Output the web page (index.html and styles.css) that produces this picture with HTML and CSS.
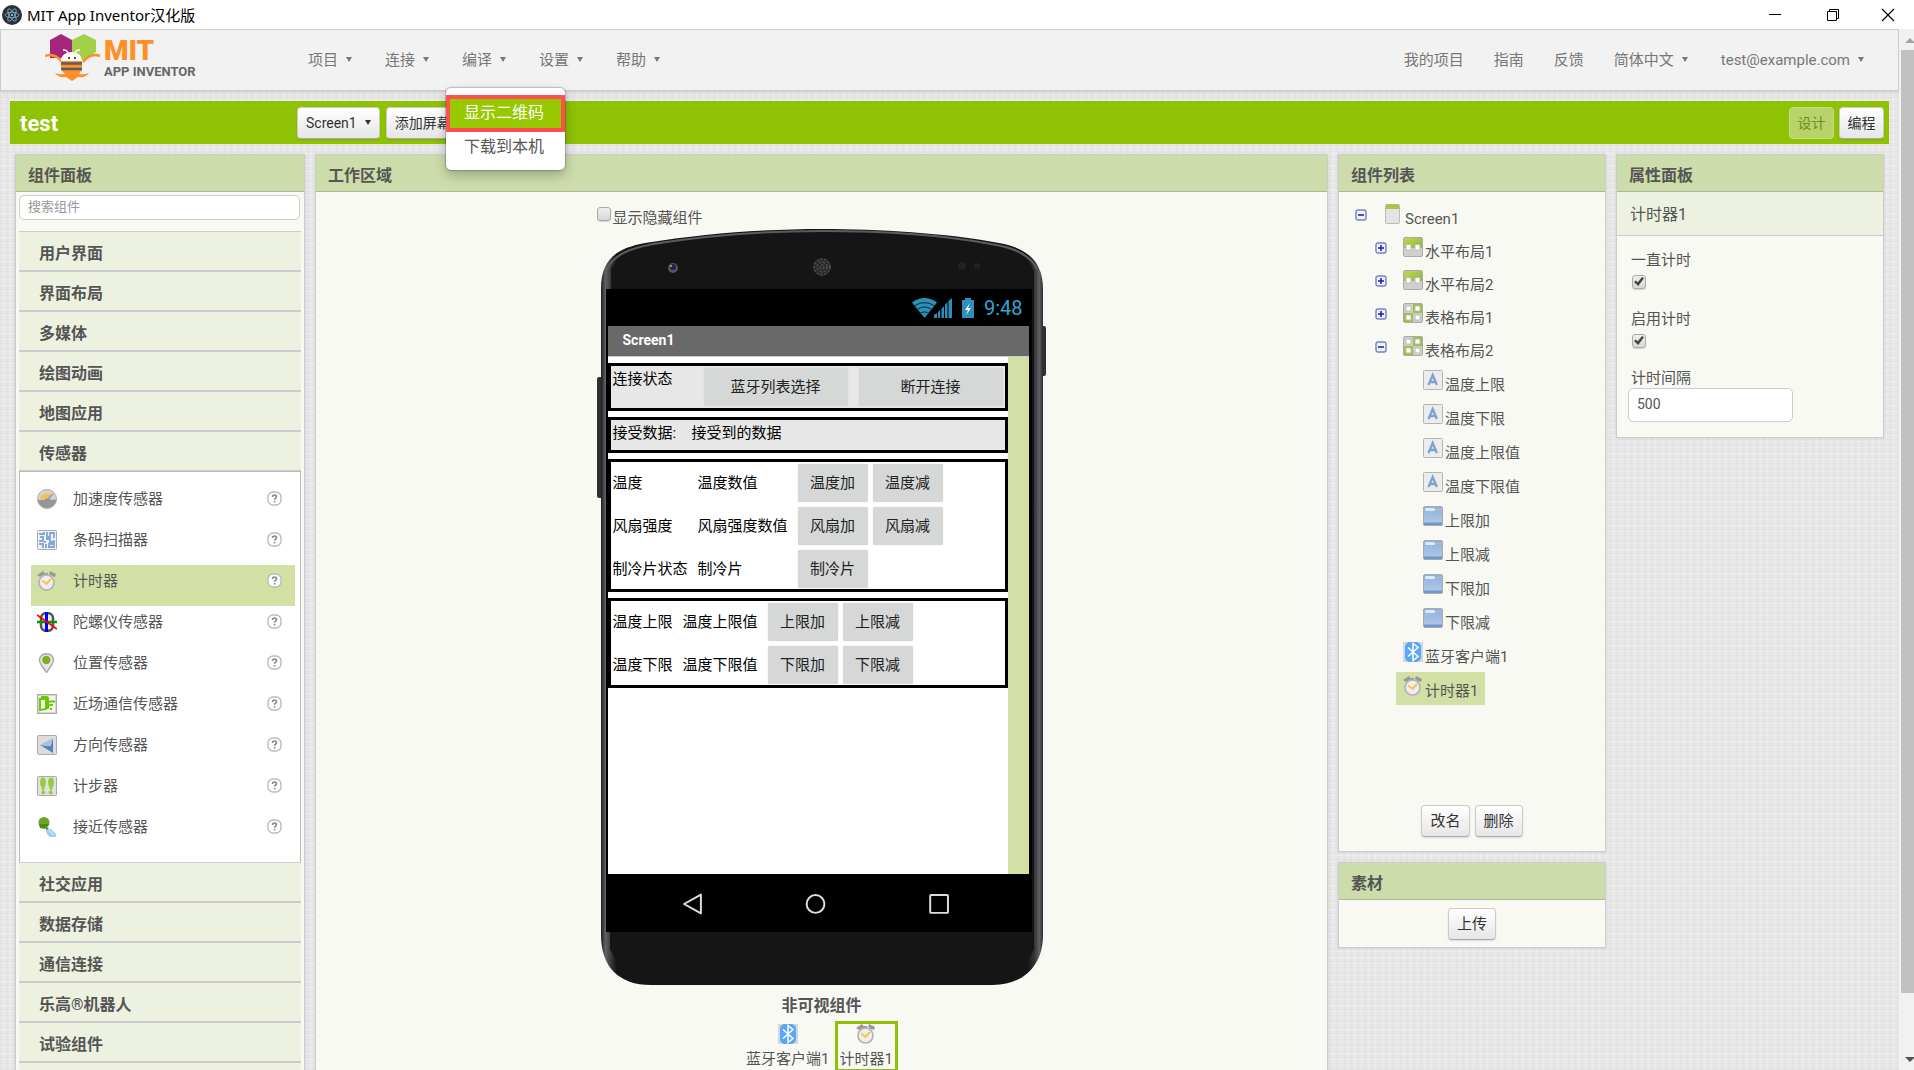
FILE: index.html
```html
<!DOCTYPE html>
<html lang="zh-CN">
<head>
<meta charset="utf-8">
<title>MIT App Inventor汉化版</title>
<link rel="stylesheet" href="styles.css">
</head>
<body>
<svg class="sprite" aria-hidden="true">
  <defs>
    <linearGradient id="g-green" x1="0" y1="0" x2="1" y2="1"><stop offset="0" stop-color="#b9da5c"/><stop offset="1" stop-color="#93b62c"/></linearGradient>
    <linearGradient id="g-blue" x1="0" y1="0" x2="0" y2="1"><stop offset="0" stop-color="#8fafdb"/><stop offset="1" stop-color="#b4cbe8"/></linearGradient>
    <linearGradient id="g-edge" x1="0" y1="0" x2="1" y2="0"><stop offset="0" stop-color="#1d1d1f"/><stop offset="0.01" stop-color="#606163"/><stop offset="0.022" stop-color="#3b3b3d"/><stop offset="0.035" stop-color="#151515"/><stop offset="0.965" stop-color="#151515"/><stop offset="0.98" stop-color="#333336"/><stop offset="0.992" stop-color="#606063"/><stop offset="1" stop-color="#29292b"/></linearGradient>
  </defs>
  <symbol id="i-help" viewBox="0 0 15 15"><rect x="1" y="1" width="13" height="13" rx="5" fill="#fff" stroke="#bbb" stroke-width="1.400"/><path d="M5.500 6c0-2.600 4-2.500 4-.2 0 1.500-1.900 1.300-1.900 3M7.600 10v1.500" fill="none" stroke="#888" stroke-width="1.600"/></symbol>
  <symbol id="i-accel" viewBox="0 0 20 20"><circle cx="10" cy="10" r="9.500" fill="#d4d4d4" stroke="#aaa"/><path d="M.800 11a9.300 9.300 0 0 0 18.400 0L17 10.500 14 11 12.500 9 9 9 7 11z" fill="#969696"/><path d="M3 11c0-5 5-8 11-6l1 2-4 3C8 8 6.500 9 6 11z" fill="#f9bf55"/><path d="M10 11l6-6" stroke="#999" stroke-width="1.500"/></symbol>
  <symbol id="i-barcode" viewBox="0 0 20 20"><rect x=".5" y=".5" width="19" height="19" rx="1" fill="#eef3fa" stroke="#aaa"/><path d="M2 4h5V2M10 2v5h3V3h4v5M3 7h3v4H2M9 9h4v3h4v-2M2 14h4v4M9 14v4M12 14h5v3h-5zM8 11v2" fill="none" stroke="#83a6d6" stroke-width="1.800"/></symbol>
  <symbol id="i-clock" viewBox="0 0 20 20"><path d="M0 4l6-4 2 3-5 3zM12 3l1-3 6 3-1 3-3-1zM7 2h4v2H7z" fill="#999"/><circle cx="9.500" cy="11.500" r="7.500" fill="#eee" stroke="#b3b3b3" stroke-width="1.700"/><path d="M5 9.500l4.500 3.300L14 8" fill="none" stroke="#fac05a" stroke-width="2"/></symbol>
  <symbol id="i-gyro" viewBox="0 0 20 20"><rect x="4" y="1.200" width="12" height="17.600" rx="5" fill="#eee" stroke="#555" stroke-width="2.500"/><path d="M0 10h20" stroke="#090" stroke-width="2.500"/><path d="M9.500 0v20" stroke="#00f" stroke-width="3"/><path d="M0 3l20 14" stroke="#f00" stroke-width="1.800"/></symbol>
  <symbol id="i-location" viewBox="0 0 20 20"><path d="M9.500 19.500L4 11.500C0 5 5 .7 9.500.7S19 5 15 11.500z" fill="#e6e6e6" stroke="#aaa" stroke-width="1.400"/><circle cx="9.300" cy="7" r="4.200" fill="#7eae25"/></symbol>
  <symbol id="i-nfc" viewBox="0 0 20 20"><rect x=".7" y=".7" width="18.600" height="18.600" fill="#f4f4f4" stroke="#aaa" stroke-width="1.400"/><path d="M3 5h6v10l-6 1zM5 4V3h5l1 1v11" fill="#fff" stroke="#6c0" stroke-width="2"/><path d="M11 9c2-2 5-2 7-1M12 12c1-2 3-1 4-1M14 14v2" fill="none" stroke="#6c0" stroke-width="2"/></symbol>
  <symbol id="i-orient" viewBox="0 0 20 20"><rect x=".5" y=".5" width="19" height="19" rx="1" fill="#dcdcdc" stroke="#aaa"/><path d="M3 10l10.500 1L16 3v15z" fill="#5581be"/><path d="M3 10L16 3l-4 8z" fill="#a9bfdf"/></symbol>
  <symbol id="i-step" viewBox="0 0 20 20"><rect x=".5" y=".5" width="19" height="19" rx="1" fill="#e0e0e0" stroke="#aaa"/><g fill="#9bc93d"><ellipse cx="6" cy="6.500" rx="2.900" ry="5"/><ellipse cx="14" cy="6.500" rx="2.900" ry="5"/><path d="M4.500 11h3l-.2 3H5zM12.500 11h3l-.5 3h-2z"/><circle cx="6.300" cy="16.500" r="1.900"/><circle cx="13.700" cy="16.500" r="1.900"/></g></symbol>
  <symbol id="i-prox" viewBox="0 0 20 20"><circle cx="7" cy="5.500" r="5.500" fill="#6ba32b"/><path d="M2 7l1 4 5 1 4-5zM9 10l3 1-3 3z" fill="#4c8a1c"/><path d="M9 13l5-1 5 5v3h-6c-2-1-4-4-4-7z" fill="#93d4f3"/><path d="M12 14l5 4" stroke="#e3f5fd"/></symbol>
  <symbol id="i-screen" viewBox="0 0 20 20"><rect x="2.500" y=".5" width="14" height="19" rx="1" fill="#e4e4e4" stroke="#bbb"/><path d="M3 .500h13V5H3z" fill="#a6c83c"/></symbol>
  <symbol id="i-harr" viewBox="0 0 20 20"><rect x=".5" y=".5" width="19" height="19" rx="1.500" fill="#cfcfcf" stroke="#aaa"/><path d="M1 1h18v10H1z" fill="url(#g-green)"/><rect x="3" y="7.500" width="5" height="5.500" rx="1" fill="#fff" stroke="#bbb"/><rect x="12" y="7.500" width="5" height="5.500" rx="1" fill="#fff" stroke="#bbb"/></symbol>
  <symbol id="i-tarr" viewBox="0 0 20 20"><rect x=".5" y=".5" width="19" height="19" rx="1.500" fill="#cfcfcf" stroke="#aaa"/><path d="M10 1h9v9h-9zM1 10h9v9H1z" fill="#9dc036"/><g fill="#fff" stroke="#bbb"><rect x="3" y="3" width="5" height="5"/><rect x="12" y="3" width="5" height="5"/><rect x="3" y="12" width="5" height="5"/><rect x="12" y="12" width="5" height="5"/></g></symbol>
  <symbol id="i-label" viewBox="0 0 20 20"><rect x=".5" y=".5" width="19" height="19" rx="1" fill="#ececec" stroke="#b4b4b4"/><path d="M5.500 15L9.700 5l4.200 10M7 12h5.500" fill="none" stroke="#7ea0d3" stroke-width="2.300"/></symbol>
  <symbol id="i-button" viewBox="0 0 20 20"><rect x=".5" y=".5" width="19" height="19" rx="1.500" fill="url(#g-blue)" stroke="#aaa"/><path d="M1 16.500h18V19H1z" fill="#7196cb"/><path d="M1 8C5 8 8 5 12 4L19 3" fill="none" stroke="#a8c1e5"/><rect x="2" y="2" width="10" height="3" rx="1.500" fill="#dfe9f6"/></symbol>
  <symbol id="i-bt" viewBox="0 0 20 20"><path d="M0 0h20v20H0z" fill="#d7d7d7"/><rect x="2" y="0" width="16" height="20" rx="5" fill="#5aa6f8"/><path d="M5 5.500l10 9L10 18.500V1.500l5 4-10 9" fill="none" stroke="#fff" stroke-width="1.500"/></symbol>
  <symbol id="i-plus" viewBox="0 0 12 12"><rect x="1" y="1" width="10" height="10" rx="2" fill="#eef2fb" stroke="#7482bd" stroke-width="1.400"/><path d="M3 6h6M6 3v6" stroke="#1515cc" stroke-width="1.500"/></symbol>
  <symbol id="i-minus" viewBox="0 0 12 12"><rect x="1" y="1" width="10" height="10" rx="2" fill="#eef2fb" stroke="#7482bd" stroke-width="1.400"/><path d="M3 6h6" stroke="#1515cc" stroke-width="1.500"/></symbol>
</svg>

<header class="titlebar">
  <svg class="app-icon" viewBox="0 0 20 20"><circle cx="10" cy="10" r="10" fill="#2b2e3b"/><g fill="none" stroke="#86b9c6" stroke-width=".8"><ellipse cx="10" cy="10" rx="7" ry="2.700"/><ellipse cx="10" cy="10" rx="7" ry="2.700" transform="rotate(60 10 10)"/><ellipse cx="10" cy="10" rx="7" ry="2.700" transform="rotate(120 10 10)"/></g><circle cx="10" cy="10" r="1" fill="#9feaf9"/></svg>
  <span class="window-title">MIT App Inventor汉化版</span>
  <div class="window-controls">
    <button aria-label="最小化"><svg viewBox="0 0 14 14"><path d="M1 6.500h12" stroke="#000"/></svg></button>
    <button aria-label="还原"><svg viewBox="0 0 14 14" fill="none" stroke="#000"><path d="M1.500 3.500h9v9h-9zM3.500 3V1.500h9v9H11"/></svg></button>
    <button aria-label="关闭"><svg viewBox="0 0 14 14"><path d="M1 1l12 12M13 1L1 13" stroke="#000" stroke-width="1.200"/></svg></button>
  </div>
</header>

<div class="viewport">
<div class="page">
  <nav class="topbar">
    <a class="logo" href="#">
      <svg class="bee" viewBox="45 32 56 48"><path d="M50 39l11-6 11 6v18H50z" fill="#a6257d"/><path d="M72 39l12-6 12 6v12l-12 8H72z" fill="#a2d046"/><path d="M45 55c8-3 13 1 17 6M100 55c-8-3-13 1-17 6" fill="none" stroke="#ff8f26" stroke-width="2.500"/><path d="M61 60h21v9l-3 4c2 0 5 1 10-1-2 3-6 5-11 4l-6 4-6-4c-5 1-9-1-11-4 5 2 8 1 10 1l-4-4z" fill="#ff8f26"/><path d="M61 62.500h21M61 68h21" stroke="#5c5c60" stroke-width="2.600"/><path d="M61 60c0-12 21-12 21 0z" fill="#fff"/><path d="M63 49c4 0 5 2 5 4M80 49c-4 0-5 2-5 4" fill="none" stroke="#fff" stroke-width="1.500"/><circle cx="69" cy="57" r="1.200" fill="#555"/><circle cx="75" cy="57" r="1.200" fill="#555"/></svg>
      <span class="wordmark"><b>MIT</b><small>APP INVENTOR</small></span>
    </a>
    <div class="menus">
      <button class="menu">项目<i class="caret"></i></button>
      <button class="menu">连接<i class="caret"></i></button>
      <div class="menu-anchor">
        <button class="menu" aria-expanded="true">编译<i class="caret"></i></button>
        <div class="dropdown">
          <a class="current" href="#">显示二维码</a>
          <a href="#">下载到本机</a>
        </div>
      </div>
      <button class="menu">设置<i class="caret"></i></button>
      <button class="menu">帮助<i class="caret"></i></button>
    </div>
    <div class="account">
      <a href="#">我的项目</a>
      <a href="#">指南</a>
      <a href="#">反馈</a>
      <button class="menu">简体中文<i class="caret"></i></button>
      <button class="menu user">test@example.com<i class="caret"></i></button>
    </div>
  </nav>

  <div class="projectbar">
    <h1>test</h1>
    <button class="btn">Screen1<i class="caret"></i></button>
    <button class="btn">添加屏幕</button>
    <div class="view-switch">
      <button class="btn" disabled>设计</button>
      <button class="btn">编程</button>
    </div>
  </div>

  <main class="columns">
    <section class="panel palette">
      <h2>组件面板</h2>
      <input class="search" type="text" placeholder="搜索组件" aria-label="搜索组件">
      <div class="categories">
        <a class="category" href="#">用户界面</a>
        <a class="category" href="#">界面布局</a>
        <a class="category" href="#">多媒体</a>
        <a class="category" href="#">绘图动画</a>
        <a class="category" href="#">地图应用</a>
        <a class="category" href="#">传感器</a>
        <ul class="components">
          <li><svg><use href="#i-accel"/></svg><span>加速度传感器</span><svg class="help"><use href="#i-help"/></svg></li>
          <li><svg><use href="#i-barcode"/></svg><span>条码扫描器</span><svg class="help"><use href="#i-help"/></svg></li>
          <li class="selected"><svg><use href="#i-clock"/></svg><span>计时器</span><svg class="help"><use href="#i-help"/></svg></li>
          <li><svg><use href="#i-gyro"/></svg><span>陀螺仪传感器</span><svg class="help"><use href="#i-help"/></svg></li>
          <li><svg><use href="#i-location"/></svg><span>位置传感器</span><svg class="help"><use href="#i-help"/></svg></li>
          <li><svg><use href="#i-nfc"/></svg><span>近场通信传感器</span><svg class="help"><use href="#i-help"/></svg></li>
          <li><svg><use href="#i-orient"/></svg><span>方向传感器</span><svg class="help"><use href="#i-help"/></svg></li>
          <li><svg><use href="#i-step"/></svg><span>计步器</span><svg class="help"><use href="#i-help"/></svg></li>
          <li><svg><use href="#i-prox"/></svg><span>接近传感器</span><svg class="help"><use href="#i-help"/></svg></li>
        </ul>
        <a class="category" href="#">社交应用</a>
        <a class="category" href="#">数据存储</a>
        <a class="category" href="#">通信连接</a>
        <a class="category" href="#">乐高®机器人</a>
        <a class="category" href="#">试验组件</a>
        <div class="category"></div>
      </div>
    </section>

    <section class="panel workspace">
      <h2>工作区域</h2>
      <div class="stage">
        <label class="show-hidden"><input type="checkbox"><span>显示隐藏组件</span></label>
        <div class="phone">
          <svg class="phone-body" viewBox="0 0 450 757">
            <rect x="0" y="148" width="6" height="121" rx="2" fill="#2f2f31"/><rect x="443" y="97" width="6" height="50" rx="2" fill="#2f2f31"/>
            <path d="M4 60C4 28 22 19 48 14C110 4 170 0 225 0S350 4 402 14C430 19 446 32 446 60V706C446 738 425 756 396 756H54C22 756 4 738 4 706z" fill="url(#g-edge)"/>
            <path d="M14 40C24 24 40 20 60 17C120 7 170 4 225 4S340 7 392 17C412 20 428 26 437 42V720C428 738 412 753 394 753H56C36 753 22 738 13 720z" fill="#151515"/>
            <path d="M10 40C18 24 36 19 56 15C120 5 170 2 225 2S340 5 394 15C414 18 432 24 440 40" fill="none" stroke="#5b5c5e" stroke-width="2"/>
            <circle cx="76" cy="39" r="5" fill="#555"/><circle cx="76" cy="38" r="3" fill="#20205a"/><circle cx="74" cy="37" r="1" fill="#aaa"/>
            <circle cx="225" cy="38" r="9" fill="#2c2c2c"/><g fill="none" stroke="#666" stroke-dasharray="2 2"><circle cx="225" cy="38" r="8"/><circle cx="225" cy="38" r="5"/><circle cx="225" cy="38" r="2"/></g>
            <circle cx="365" cy="37" r="4" fill="#222"/><circle cx="380" cy="37" r="3" fill="#222"/>
          </svg>
          <div class="display">
            <div class="status">
              <svg class="signal" viewBox="0 0 64 20"><path d="M0 4.500C7-1.500 18-1.500 25 4.500L12.500 20z" fill="#2e8fba"/><path d="M2 8.500c6-5 15-5 21 0M5 12c4-4 11-4 15 0M8 15.500c3-2 6-2 9 0" fill="none" stroke="#06202b" stroke-width="1"/><path d="M22 20v-3l3-2v5zM26 20v-6l2-2v8zM29.500 20v-9l2.500-3v12zM33 20V7l2.500-3v16zM36.500 20V3L40 0v20z" fill="#2e8fba"/><path d="M50 2h3V0h6v2h3v18H50z" fill="#2e8fba"/><path d="M58 5l-5 7h3l-2 5 5-7h-3z" fill="#fff"/></svg>
              <span>9:48</span>
            </div>
            <div class="app-title">Screen1</div>
            <div class="app-screen">
              <div class="form">
                <div class="frame tinted connect">
                  <span>连接状态</span><button class="device-btn">蓝牙列表选择</button><button class="device-btn">断开连接</button>
                </div>
                <div class="frame tinted received"><span>接受数据:</span><span>接受到的数据</span></div>
                <div class="frame readings">
                  <span>温度</span><span>温度数值</span><button class="device-btn">温度加</button><button class="device-btn">温度减</button>
                  <span>风扇强度</span><span>风扇强度数值</span><button class="device-btn">风扇加</button><button class="device-btn">风扇减</button>
                  <span>制冷片状态</span><span>制冷片</span><button class="device-btn">制冷片</button>
                </div>
                <div class="frame limits">
                  <span>温度上限</span><span>温度上限值</span><button class="device-btn">上限加</button><button class="device-btn">上限减</button>
                  <span>温度下限</span><span>温度下限值</span><button class="device-btn">下限加</button><button class="device-btn">下限减</button>
                </div>
              </div>
            </div>
            <svg class="navkeys" viewBox="0 0 426 58" fill="none" stroke="#ddd" stroke-width="2"><path d="M77 30l17-9.500v19z" stroke-linejoin="round"/><circle cx="210" cy="30" r="9"/><rect x="326" y="21" width="18" height="18" rx="1"/></svg>
          </div>
        </div>
        <h3>非可视组件</h3>
        <div class="invisible">
          <div class="nonvisible"><svg><use href="#i-bt"/></svg><span>蓝牙客户端1</span></div>
          <div class="nonvisible picked"><svg><use href="#i-clock"/></svg><span>计时器1</span></div>
        </div>
      </div>
    </section>

    <div class="side">
      <section class="panel">
        <h2>组件列表</h2>
        <ul class="tree">
          <li class="branch"><svg class="toggle"><use href="#i-minus"/></svg><span class="node"><svg><use href="#i-screen"/></svg><span>Screen1</span></span></li>
          <li class="branch l1"><svg class="toggle"><use href="#i-plus"/></svg><span class="node"><svg><use href="#i-harr"/></svg><span>水平布局1</span></span></li>
          <li class="branch l1"><svg class="toggle"><use href="#i-plus"/></svg><span class="node"><svg><use href="#i-harr"/></svg><span>水平布局2</span></span></li>
          <li class="branch l1"><svg class="toggle"><use href="#i-plus"/></svg><span class="node"><svg><use href="#i-tarr"/></svg><span>表格布局1</span></span></li>
          <li class="branch l1"><svg class="toggle"><use href="#i-minus"/></svg><span class="node"><svg><use href="#i-tarr"/></svg><span>表格布局2</span></span></li>
          <li class="l2"><span class="node"><svg><use href="#i-label"/></svg><span>温度上限</span></span></li>
          <li class="l2"><span class="node"><svg><use href="#i-label"/></svg><span>温度下限</span></span></li>
          <li class="l2"><span class="node"><svg><use href="#i-label"/></svg><span>温度上限值</span></span></li>
          <li class="l2"><span class="node"><svg><use href="#i-label"/></svg><span>温度下限值</span></span></li>
          <li class="l2"><span class="node"><svg><use href="#i-button"/></svg><span>上限加</span></span></li>
          <li class="l2"><span class="node"><svg><use href="#i-button"/></svg><span>上限减</span></span></li>
          <li class="l2"><span class="node"><svg><use href="#i-button"/></svg><span>下限加</span></span></li>
          <li class="l2"><span class="node"><svg><use href="#i-button"/></svg><span>下限减</span></span></li>
          <li class="l1"><span class="node"><svg><use href="#i-bt"/></svg><span>蓝牙客户端1</span></span></li>
          <li class="l1"><span class="node selected"><svg><use href="#i-clock"/></svg><span>计时器1</span></span></li>
        </ul>
        <div class="actions"><button class="btn">改名</button><button class="btn">删除</button></div>
      </section>
      <section class="panel">
        <h2>素材</h2>
        <div class="upload"><button class="btn">上传</button></div>
      </section>
    </div>

    <div class="side">
      <section class="panel">
        <h2>属性面板</h2>
        <p class="target">计时器1</p>
        <div class="props">
          <div class="prop"><label for="p-always">一直计时</label><input id="p-always" type="checkbox" checked></div>
          <div class="prop"><label for="p-enabled">启用计时</label><input id="p-enabled" type="checkbox" checked></div>
          <div class="prop"><label for="p-interval">计时间隔</label><input id="p-interval" type="text" value="500"></div>
        </div>
      </section>
    </div>
  </main>
</div>
<div class="scrollbar"><i class="up"></i><div class="thumb"></div><i class="down"></i></div>
</div>
</body>
</html>
```
FILE: styles.css
```css
* { box-sizing: border-box; }

body {
  margin: 0;
  height: 100vh;
  display: flex;
  flex-direction: column;
  overflow: hidden;
  font: 15px/20px Roboto, "Noto Sans CJK SC", sans-serif;
  color: #555;
}

button, input { font: inherit; color: inherit; margin: 0; }
button { border: 0; padding: 0; background: none; }
a { color: inherit; text-decoration: none; }
ul { list-style: none; margin: 0; padding: 0; }
h1, h2, h3, p { margin: 0; }
svg { display: block; flex: none; width: 20px; height: 20px; }
.sprite { position: absolute; width: 0; height: 0; }

/* Window frame */
.titlebar {
  flex: none;
  display: flex;
  align-items: center;
  height: 29px;
  padding-left: 2px;
  background: #fff;
  color: #000;
}
.window-title { margin-left: 5px; font: 15px/20px "Noto Sans", "Noto Sans CJK SC", sans-serif; }
.window-controls { display: flex; margin-left: auto; }
.window-controls button { width: 58px; height: 28px; display: grid; place-items: center; }
.window-controls button:last-child { width: 52px; }
.window-controls svg { width: 14px; height: 14px; }

.viewport { flex: 1; min-height: 0; display: flex; }
.page {
  flex: 1;
  min-width: 0;
  display: flex;
  flex-direction: column;
  overflow: hidden;
  background-color: #e7e7e7;
  background-image:
    repeating-linear-gradient(90deg, rgba(0,0,0,.02) 0 1px, transparent 1px 3px, rgba(255,255,255,.2) 3px 4px, transparent 4px 7px),
    repeating-linear-gradient(0deg, rgba(0,0,0,.02) 0 1px, transparent 1px 4px, rgba(255,255,255,.2) 4px 5px, transparent 5px 6px);
}
.scrollbar {
  flex: none;
  width: 15px;
  padding: 8px 0 8px 2px;
  display: flex;
  flex-direction: column;
  background: #f1f1f1;
}
.scrollbar .thumb { flex: none; height: 92%; margin: 7px 0 auto; background: #c1c1c1; }
.up, .down { margin: 0 4px; border: 5px solid transparent; border-top-width: 0; border-bottom-color: #a3a3a3; width: 10px; }
.up { margin-top: 1px; }
.down { border-width: 5px 5px 0; border-color: #505050 transparent transparent; }

/* Top navigation */
.topbar {
  flex: none;
  height: 62px;
  display: flex;
  align-items: center;
  padding: 0 34px 0 44px;
  background: #f2f2f2;
  border: 1px solid #ccc;
  box-shadow: 0 1px 4px rgba(0,0,0,.12);
  color: #777;
}
.logo { display: flex; width: 263px; padding-bottom: 6px; }
.bee { width: 56px; height: 48px; }
.wordmark { display: flex; flex-direction: column; margin-left: 3px; padding-top: 6px; }
.wordmark b { font-size: 28px; line-height: 24px; font-weight: 900; color: #ff8f26; }
.wordmark small { font-size: 13px; line-height: 18px; font-weight: 700; color: #666; }
.caret { display: inline-block; margin-left: 8px; border: 3px solid transparent; border-top: 5px solid currentColor; border-bottom: 0; vertical-align: 3px; }
.menus { display: flex; gap: 33px; padding-bottom: 1px; }
.account { display: flex; gap: 30px; margin-left: auto; padding-bottom: 1px; }
.user { margin-left: 3px; }
.menu-anchor { position: relative; }
.dropdown {
  position: absolute;
  z-index: 2;
  left: -16px;
  top: 38px;
  width: 119px;
  padding: 7px 0 8px;
  background: #fff;
  border-radius: 5px;
  box-shadow: 0 0 1px 1px rgba(0,0,0,.2), 0 5px 12px rgba(0,0,0,.25);
  font-size: 16px;
  color: #555;
}
.dropdown a { display: block; padding: 5px 18px; line-height: 20px; }
.dropdown .current { padding: 4px 14px 5px; border: 4px solid #ff5050; background: #97c800; color: #fff; }

/* Buttons */
.btn {
  height: 32px;
  padding: 0 8px;
  border: 1px solid #ccc;
  border-bottom-color: #aaa;
  border-radius: 4px;
  background: linear-gradient(#fff, #e6e6e6);
  box-shadow: 0 1px 2px rgba(0,0,0,.12);
  color: #333;
}
.btn:disabled { background: #b9d36b; border-color: #c5da88; box-shadow: none; color: #6d8c20; }

.projectbar {
  flex: none;
  display: flex;
  align-items: center;
  gap: 6px;
  height: 43px;
  margin: 10px 10px 0;
  padding: 0 5px 0 10px;
  background: #8fc202;
}
.projectbar h1 { width: 271px; padding-top: 2px; font-size: 22px; line-height: 28px; color: #fff; }
.projectbar .btn { font-size: 14px; }
.view-switch { display: flex; gap: 5px; margin-left: auto; }
.view-switch .btn { width: 45px; padding: 0; }

/* Columns and panels */
.columns {
  flex: 1;
  min-height: 0;
  display: grid;
  grid-template-columns: 290px minmax(460px, 1fr) 268px 268px;
  gap: 10px;
  padding: 10px 15px 0;
}
.panel { background: #f8f9f3; border: 1px solid #ccc; box-shadow: 0 0 3px rgba(0,0,0,.1); }
.panel h2 {
  height: 37px;
  padding: 0 12px;
  font-size: 16px;
  line-height: 41px;
  font-weight: 700;
  background: #ccdcaa;
  border-bottom: 1px solid #aeb69e;
}
.side { display: flex; flex-direction: column; gap: 10px; }
input[type="text"] { border: 1px solid #ccc; border-radius: 5px; background: #fff; outline: 0; }
input[type="checkbox"] {
  appearance: none;
  width: 14px;
  height: 14px;
  border: 1px solid #aaa;
  border-radius: 3px;
  background: linear-gradient(#eee, #d8d8d8);
  box-shadow: 0 1px 1px rgba(0,0,0,.15);
}
input[type="checkbox"]:checked::before {
  content: "";
  display: block;
  width: 10px;
  height: 9px;
  margin: 1px;
  background: #444;
  clip-path: polygon(0 55%, 18% 38%, 38% 58%, 80% 0, 100% 15%, 42% 100%);
}

/* Palette */
.search { display: block; width: 281px; height: 25px; margin: 3px 3px 0; padding: 0 8px 2px; }
.search[type="text"] { font-size: 13px; }
.search::placeholder { color: #999; opacity: 1; }
.categories { margin: 11px 3px 0; }
.category {
  display: block;
  height: 40px;
  padding: 0 20px;
  font-size: 16px;
  line-height: 44px;
  font-weight: 700;
  background: #edf1e0;
  border: solid #ccc;
  border-width: 1px 0;
}
.components { padding: 11px 5px 10px 11px; background: #fff; border: solid #bbb; border-width: 1px 1px 0; }
.components li { display: flex; height: 41px; padding: 6px 13px 0 6px; }
.components .selected, .node.selected { background: #d2e0a6; }
.components span { flex: 1; margin-left: 16px; }
.components .help { width: 15px; height: 15px; margin-top: 2px; }

/* Workspace */
.stage { width: 450px; margin: 0 auto; }
.show-hidden { display: flex; gap: 2px; padding: 15px 0 1px; }
.show-hidden span { padding-top: 1px; }
.phone { position: relative; height: 757px; padding: 60px 0 0 9px; }
.phone-body { position: absolute; inset: 0; width: 450px; height: 757px; }
.display { position: relative; width: 426px; padding: 0 3px 0 2px; background: #000; color: #000; }
.status { display: flex; justify-content: flex-end; gap: 8px; height: 37px; padding: 9px 6px 0 0; color: #33a5d5; font-size: 20px; }
.signal { width: 64px; height: 20px; }
.app-title { height: 31px; padding: 4px 15px; background: #696969; border-bottom: 1px solid #ccc; color: #fff; font-weight: 700; font-size: 14px; }
.app-screen { height: 517px; padding-right: 21px; background: #d2e0a6; }
.form { display: flex; flex-direction: column; gap: 6px; height: 100%; padding-top: 6px; background: #fff; }
.frame { border: 3px solid #000; padding: 2px; }
.tinted { background: #e7e7e7; }
.tinted span { padding-top: 1px; }
.device-btn { height: 38px; background: #d6d8d7; border-radius: 2px; box-shadow: 0 0 1px #bbb; color: #222; }
.connect { display: grid; grid-template-columns: 80px 144px 144px; column-gap: 11px; }
.received { display: grid; grid-template-columns: 79px auto; height: 36px; }
.readings, .limits { display: grid; align-items: center; gap: 5px; justify-content: start; padding-bottom: 1px; }
.readings { grid-template-columns: 80px 95px 70px 70px; }
.limits { grid-template-columns: 65px 80px 70px 70px; }
.readings span, .limits span { white-space: nowrap; }
.navkeys { width: 421px; height: 58px; overflow: visible; }
.stage h3 { padding-top: 8px; text-align: center; font-size: 16px; line-height: 24px; font-weight: 700; }
.invisible { display: flex; justify-content: center; gap: 4px; margin-top: 3px; }
.nonvisible { display: flex; flex-direction: column; align-items: center; gap: 5px; padding: 3px 1px 0; }
.nonvisible.picked { padding: 0 2px; border: 3px solid #8fc202; }
.nonvisible span { line-height: 20px; }

/* Component tree */
.tree { padding: 8px 0 0 16px; }
.tree li { display: flex; height: 34px; padding-left: 21px; }
.tree .branch { height: 33px; padding-left: 0; }
.tree .branch + .l2 { margin-top: 1px; }
.tree .l1 { padding-left: 41px; }
.tree .branch.l1 { padding-left: 20px; }
.tree .l2 { padding-left: 61px; }
.toggle { width: 12px; height: 12px; margin: 9px 9px 0 0; }
.node { display: flex; gap: 2px; height: 33px; padding: 4px 7px 0; }
.node > span { margin-top: 5px; }
.actions { display: flex; justify-content: center; gap: 5px; padding: 99px 0 14px; }
.upload { display: flex; justify-content: center; padding: 8px 0 7px; }

/* Properties */
.target { height: 44px; padding: 0 13px; font-size: 16px; line-height: 45px; background: #edf1e0; border-bottom: 1px solid #ccc; }
.props { padding: 14px 11px 15px; }
.prop { display: flex; flex-direction: column; align-items: flex-start; height: 59px; }
.prop label { padding: 0 3px; line-height: 20px; }
.prop input[type="checkbox"] { margin: 5px 4px 4px; }
.prop input[type="text"] { width: 165px; height: 34px; padding: 0 8px 2px; font-size: 14px; }
.prop:last-child { height: 54px; }
```
